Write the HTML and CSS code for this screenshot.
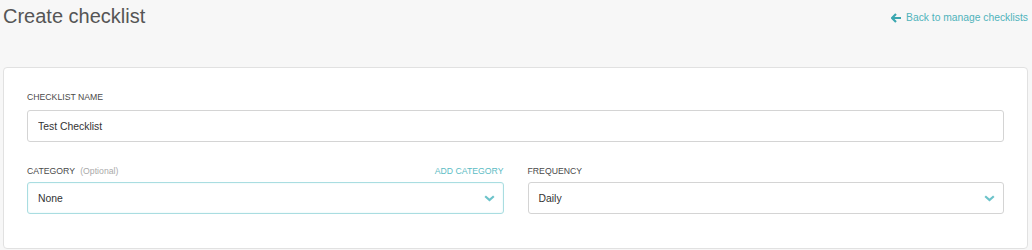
FILE: index.html
```html
<!DOCTYPE html>
<html lang="en">
<head>
    <meta charset="UTF-8">
    <meta name="viewport" content="width=device-width, initial-scale=1.0">
    <title>Create checklist</title>
    <link rel="stylesheet" href="styles.css">
</head>
<body>
    <div class="page">
        <div class="page-header">
            <h1>Create checklist</h1>
            <a class="back-link" href="#">
                <svg width="11" height="10" viewBox="0 0 11 10"><path d="M5 1 L1 5 L5 9 M1.5 5 H10" fill="none" stroke="#3aa7b0" stroke-width="2.2"/></svg>
                Back to manage checklists
            </a>
        </div>
        <form class="card">
            <div class="form-group">
                <div class="label-row">
                    <label>Checklist name</label>
                </div>
                <input type="text" class="field" value="Test Checklist">
            </div>
            <div class="form-row">
                <div class="form-group">
                    <div class="label-row">
                        <label>Category <span class="optional">(Optional)</span></label>
                        <a class="add-link" href="#">Add category</a>
                    </div>
                    <div class="field select focused">
                        <span>None</span>
                        <svg width="11" height="7" viewBox="0 0 11 7"><path d="M1.2 1.2 L5.5 5 L9.8 1.2" fill="none" stroke="#6cc3ca" stroke-width="2.2"/></svg>
                    </div>
                </div>
                <div class="form-group">
                    <div class="label-row">
                        <label>Frequency</label>
                    </div>
                    <div class="field select">
                        <span>Daily</span>
                        <svg width="11" height="7" viewBox="0 0 11 7"><path d="M1.2 1.2 L5.5 5 L9.8 1.2" fill="none" stroke="#6cc3ca" stroke-width="2.2"/></svg>
                    </div>
                </div>
            </div>
        </form>
    </div>
</body>
</html>
```

FILE: styles.css
```css
* {
    margin: 0;
    padding: 0;
    box-sizing: border-box;
    font-family: 'Liberation Sans', Arial, sans-serif;
}

body {
    background: #f7f7f7;
}

.page {
    padding: 0 4px 0 3px;
}

.page-header {
    display: flex;
    justify-content: space-between;
    align-items: flex-start;
    height: 67px;
}

h1 {
    font-size: 20px;
    font-weight: normal;
    color: #555;
    line-height: 24px;
    margin-top: 4px;
}

.back-link {
    display: flex;
    align-items: center;
    gap: 4px;
    margin-top: 12px;
    font-size: 10.3px;
    color: #4fb3bb;
    text-decoration: none;
}

.card {
    background: white;
    border: 1px solid #e1e1e1;
    border-radius: 4px;
    padding: 21px 23px 34px 23px;
    height: 182px;
}

.form-group {
    flex: 1;
    margin-bottom: 21px;
}

.form-row {
    display: flex;
    gap: 24px;
}

.form-row .form-group {
    margin-bottom: 0;
}

.label-row {
    display: flex;
    justify-content: space-between;
    align-items: center;
    height: 15px;
    margin-bottom: 6px;
}

.form-row .label-row {
    margin-bottom: 4px;
}

label {
    font-size: 8.7px;
    text-transform: uppercase;
    color: #4a4a4a;
}

.optional {
    text-transform: none;
    color: #aaa;
    margin-left: 3px;
}

.add-link {
    font-size: 8.7px;
    text-transform: uppercase;
    color: #5cbcc4;
    text-decoration: none;
}

.field {
    display: flex;
    align-items: center;
    justify-content: space-between;
    width: 100%;
    height: 32px;
    padding: 0 8px 0 10px;
    border: 1px solid #d4d4d4;
    border-radius: 3px;
    background: white;
    font-size: 10.4px;
    color: #333;
}

input.field {
    outline: none;
}

.focused {
    border-color: #a9dde1;
    box-shadow: inset 0 0 2px #d9f2f4;
}
```
